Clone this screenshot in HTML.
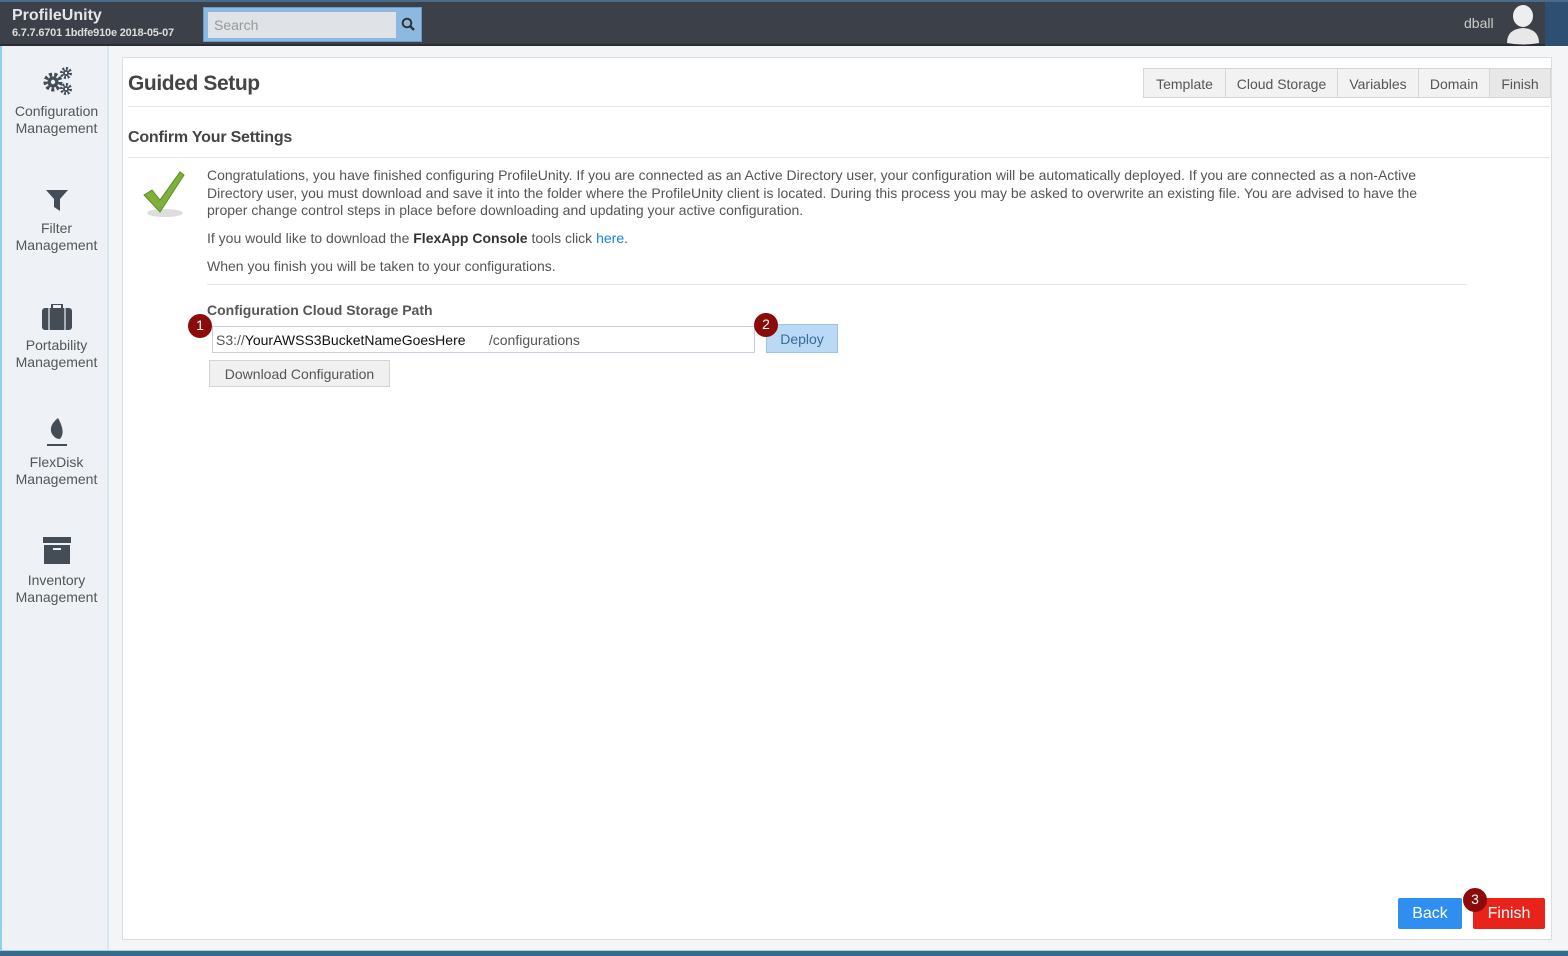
<!DOCTYPE html><html><head><style>
body{margin:0;width:1568px;height:955px;overflow:hidden;background:#f4f5f7;font-family:"Liberation Sans",sans-serif;position:relative;color:#444}
.top{position:absolute;left:0;top:0;width:1568px;height:46px;background:#3c4049;border-top:2px solid #4a6a8a;box-sizing:border-box;border-bottom:2px solid #2a2d33}
.a{position:absolute}
.side{position:absolute;left:0;top:46px;width:109px;height:905px;background:#eef1f5;border-left:2px solid #8fd0f0;border-right:2px solid #d5e6f5;box-sizing:border-box}
.si{position:absolute;width:109px;text-align:center;font-size:14px;color:#555;line-height:17px}
.panel{position:absolute;left:122px;top:57px;width:1430px;height:883px;background:#fff;border:1px solid #ddd;box-sizing:border-box}
.tab{position:absolute;top:68px;height:30px;line-height:30px;font-size:14px;color:#555;background:#f2f2f2;border:1px solid #d6d6d6;box-sizing:border-box;text-align:center}
p{margin:0}
.badge{position:absolute;width:24px;height:24px;border-radius:50%;background:#8b0a0a;color:#fff;font-size:14px;text-align:center;line-height:23px}
</style></head><body>
<div class="top">
<div class="a" style="left:12px;top:5px;font-size:16px;font-weight:bold;color:#e6e6e6">ProfileUnity</div>
<div class="a" style="left:12px;top:25px;font-size:11px;font-weight:bold;color:#ddd;letter-spacing:-0.2px">6.7.7.6701 1bdfe910e 2018-05-07</div>
<div class="a" style="left:203px;top:5px;width:219px;height:35px;background:#8db8e0;box-sizing:border-box;border:1px solid #6a98c8"></div>
<div class="a" style="left:208px;top:10px;width:188px;height:26px;background:#dfe2e6;font-size:14px;color:#999;line-height:26px;padding-left:6px;box-sizing:border-box">Search</div>
<svg class="a" style="left:401px;top:15px" width="15" height="15" viewBox="0 0 15 15"><circle cx="6" cy="6" r="4.3" fill="none" stroke="#333" stroke-width="2"/><path d="M9 9l4 4" stroke="#333" stroke-width="2.4"/></svg>
<div class="a" style="left:1464px;top:13px;font-size:14px;color:#ccc">dball</div>
<svg class="a" style="left:1505px;top:1px" width="36" height="42" viewBox="0 0 36 42"><ellipse cx="18" cy="13" rx="10" ry="11" fill="#eee"/><path d="M2 40q0-14 16-15q16 1 16 15q-16 3-32 0z" fill="#e8e8e8"/></svg>
<div class="a" style="left:1545px;top:0;width:23px;height:44px;background:#2e4f72"></div>
</div>
<div class="side">
<svg class="a" style="left:38px;top:20px" width="34" height="30" viewBox="0 0 34 30"><circle cx="13" cy="16" r="7.5" fill="none" stroke="#444c55" stroke-width="4" stroke-dasharray="3 2.2"/><circle cx="13" cy="16" r="5.5" fill="#444c55"/><circle cx="13" cy="16" r="2.2" fill="#eef1f5"/><circle cx="26" cy="7" r="4.5" fill="none" stroke="#444c55" stroke-width="3" stroke-dasharray="2 1.5"/><circle cx="26" cy="7" r="3" fill="#444c55"/><circle cx="26" cy="23" r="4.5" fill="none" stroke="#444c55" stroke-width="3" stroke-dasharray="2 1.5"/><circle cx="26" cy="23" r="3" fill="#444c55"/><circle cx="26" cy="7" r="1.2" fill="#eef1f5"/><circle cx="26" cy="23" r="1.2" fill="#eef1f5"/></svg>
<div class="si" style="top:57px">Configuration<br>Management</div>
<svg class="a" style="left:43px;top:142px" width="24" height="24" viewBox="0 0 24 24"><path d="M1 2h22l-8 9v12l-6-4v-8z" fill="#444c55"/></svg>
<div class="si" style="top:174px">Filter<br>Management</div>
<svg class="a" style="left:40px;top:258px" width="30" height="26" viewBox="0 0 30 26"><rect x="10" y="0" width="10" height="5" rx="1" fill="none" stroke="#444c55" stroke-width="2"/><rect x="0" y="4" width="30" height="22" rx="3" fill="#444c55"/><path d="M7 4v22M23 4v22" stroke="#eef1f5" stroke-width="1.2"/></svg>
<div class="si" style="top:291px">Portability<br>Management</div>
<svg class="a" style="left:43px;top:372px" width="24" height="30" viewBox="0 0 24 30"><path d="M13 0q-10 8-6 16q3 5 8 5q6-7-2-21z" fill="#444c55"/><rect x="2" y="26" width="20" height="2" fill="#444c55"/></svg>
<div class="si" style="top:408px">FlexDisk<br>Management</div>
<svg class="a" style="left:41px;top:491px" width="28" height="28" viewBox="0 0 28 28"><rect x="0" y="0" width="28" height="6" fill="#444c55"/><rect x="1" y="8" width="26" height="19" fill="#444c55"/><rect x="10" y="11" width="8" height="2" fill="#eef1f5"/></svg>
<div class="si" style="top:526px">Inventory<br>Management</div>
</div>
<div class="panel"></div>
<div class="a" style="left:128px;top:72px;font-size:21px;font-weight:bold;color:#444;letter-spacing:-0.4px">Guided Setup</div>
<div class="a" style="left:128px;top:106px;width:1422px;height:1px;background:#e4e4e4"></div>
<div class="tab" style="left:1143px;width:83px">Template</div>
<div class="tab" style="left:1225px;width:113px">Cloud Storage</div>
<div class="tab" style="left:1337px;width:82px">Variables</div>
<div class="tab" style="left:1418px;width:72px">Domain</div>
<div class="tab" style="left:1489px;width:62px;background:#e8e8e8">Finish</div>
<div class="a" style="left:128px;top:129px;font-size:16px;font-weight:bold;color:#444;letter-spacing:-0.2px">Confirm Your Settings</div>
<div class="a" style="left:128px;top:157px;width:1422px;height:1px;background:#e4e4e4"></div>
<svg class="a" style="left:140px;top:170px" width="50" height="50" viewBox="0 0 50 50"><ellipse cx="25" cy="43" rx="18" ry="4" fill="#ddd"/><path d="M4 25l8-5 8 10 20-28 4 3-24 37z" fill="#7fb13a" stroke="#5d8a22" stroke-width="1"/></svg>
<div class="a" style="left:207px;top:167px;width:1240px;font-size:14px;line-height:17.5px;color:#555">
<p>Congratulations, you have finished configuring ProfileUnity. If you are connected as an Active Directory user, your configuration will be automatically deployed. If you are connected as a non-Active Directory user, you must download and save it into the folder where the ProfileUnity client is located. During this process you may be asked to overwrite an existing file. You are advised to have the proper change control steps in place before downloading and updating your active configuration.</p>
<p style="margin-top:10px">If you would like to download the <b style="color:#333">FlexApp Console</b> tools click <span style="color:#1a7fd6">here</span>.</p>
<p style="margin-top:11px">When you finish you will be taken to your configurations.</p></div>
<div class="a" style="left:207px;top:284px;width:1260px;height:1px;background:#e4e4e4"></div>
<div class="a" style="left:207px;top:302px;font-size:14px;font-weight:bold;color:#555">Configuration Cloud Storage Path</div>
<div class="a" style="left:212px;top:326px;width:543px;height:27px;border:1px solid #ccd;box-sizing:border-box;font-size:14px;line-height:26px;color:#555;padding-left:3px">S3://<span style="color:#111">YourAWSS3BucketNameGoesHere</span>&nbsp;&nbsp;&nbsp;&nbsp;&nbsp; /configurations</div>
<div class="a" style="left:766px;top:324px;width:72px;height:29px;background:#b9d9f5;border:1px solid #9cc4ea;box-sizing:border-box;font-size:14px;line-height:28px;text-align:center;color:#3a6a9a">Deploy</div>
<div class="a" style="left:209px;top:360px;width:181px;height:27px;background:#f0f0f0;border:1px solid #d4d4d4;box-sizing:border-box;font-size:14px;line-height:26px;text-align:center;color:#555">Download Configuration</div>
<div class="badge" style="left:188px;top:314px">1</div>
<div class="badge" style="left:754px;top:313px">2</div>
<div class="a" style="left:1398px;top:898px;width:64px;height:31px;background:#2e8ff0;border-radius:2px;color:#fff;font-size:16px;text-align:center;line-height:31px">Back</div>
<div class="a" style="left:1473px;top:898px;width:72px;height:31px;background:#e8231a;border-radius:2px;color:#fff;font-size:16px;text-align:center;line-height:31px">Finish</div>
<div class="badge" style="left:1463px;top:888px">3</div>
<div class="a" style="left:0;top:950px;width:1568px;height:5px;background:#3a6a8a;border-top:1px solid #9fd4ee"></div>
</body></html>
